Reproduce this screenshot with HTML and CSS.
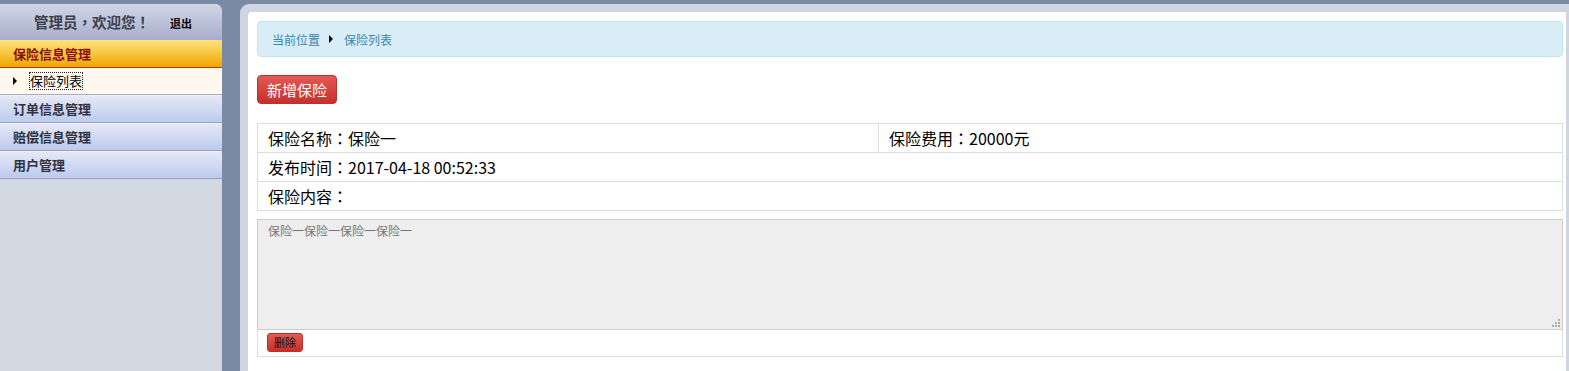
FILE: index.html
```html
<!DOCTYPE html>
<html lang="zh-CN">
<head>
<meta charset="utf-8">
<title>保险列表</title>
<link rel="stylesheet" href="styles.css">
</head>
<body>
<div class="layout">
  <aside class="sidebar">
    <div class="side-head">
      <span class="welcome">管理员<span class="pc">，</span>欢迎您<span class="pc">！</span></span>
      <a class="logout" href="#">退出</a>
    </div>
    <div class="menu-title active">保险信息管理</div>
    <div class="menu-sub"><span class="tri"></span><a class="sub-link" href="#">保险列表</a></div>
    <div class="menu-title">订单信息管理</div>
    <div class="menu-title">赔偿信息管理</div>
    <div class="menu-title">用户管理</div>
  </aside>
  <main class="frame">
    <div class="content">
      <div class="crumb">
        <span class="crumb-link">当前位置</span>
        <span class="crumb-tri"></span>
        <span class="crumb-link">保险列表</span>
      </div>
      <div class="actions"><button class="btn-red">新增保险</button></div>
      <table class="info">
        <tr>
          <td class="col1">保险名称<span class="pc">：</span>保险一</td>
          <td>保险费用<span class="pc">：</span>20000元</td>
        </tr>
        <tr><td colspan="2">发布时间<span class="pc">：</span>2017-04-18 00:52:33</td></tr>
        <tr><td colspan="2">保险内容<span class="pc">：</span></td></tr>
      </table>
      <div class="detail">
        <div class="textbox">保险一保险一保险一保险一<span class="grip"></span></div>
        <div class="ops"><button class="btn-del">删除</button></div>
      </div>
    </div>
  </main>
</div>
</body>
</html>
```
FILE: styles.css
```css
html, body {
  margin: 0;
  padding: 0;
  height: 100%;
}
body {
  background: #7b8aa4;
  font-family: "Noto Sans CJK SC", "Microsoft YaHei", "Liberation Sans", sans-serif;
  overflow: hidden;
  text-spacing-trim: space-all;
  font-feature-settings: "chws" 0, "halt" 0, "palt" 0;
}
.pc {
  display: inline-block;
  width: 1em;
  text-align: center;
  font-family: "Noto Sans CJK TC", "Noto Sans CJK SC", sans-serif;
}
.layout {
  display: flex;
  gap: 18px;
  padding-top: 4px;
  height: 367px;
}
.sidebar {
  width: 222px;
  flex: none;
  background: #d2d8e2;
  border-top-right-radius: 7px;
  overflow: hidden;
}
.side-head {
  height: 36px;
  background: linear-gradient(#d0d5e6, #a9afcb);
  display: flex;
  align-items: center;
  padding-left: 34px;
  box-sizing: border-box;
}
.welcome {
  font-size: 14.5px;
  font-weight: bold;
  color: #3c3f4c;
  line-height: 18px;
  white-space: nowrap;
}
.logout {
  margin-left: 20px;
  font-size: 11px;
  font-weight: bold;
  color: #000;
  text-decoration: none;
  margin-top: 2px;
}
.menu-title {
  height: 26px;
  line-height: 26px;
  padding-left: 13px;
  font-size: 13px;
  font-weight: bold;
  color: #30333f;
  background: linear-gradient(#e5e8f6, #bccaee);
  border-top: 1px solid #eef0f8;
  border-bottom: 1px solid #9da3bc;
}
.menu-title.active {
  height: 27px;
  line-height: 27px;
  color: #8a1010;
  background: linear-gradient(#ffe37e, #f0a600);
  border-top: none;
  border-bottom: 1px solid #b3361a;
}
.menu-sub {
  height: 26px;
  background: #fff8ef;
  display: flex;
  align-items: center;
  padding-left: 13px;
  border-bottom: 1px solid #a6acc4;
}
.tri {
  width: 0;
  height: 0;
  border-top: 4px solid transparent;
  border-bottom: 4px solid transparent;
  border-left: 4px solid #000;
}
.sub-link {
  margin-left: 13px;
  font-size: 13px;
  color: #000;
  text-decoration: none;
  outline: 1px dotted #222;
  line-height: 16px;
}
.frame {
  flex: 1;
  background: #d0d6e1;
  border-top-left-radius: 9px;
  padding: 8px 3px 0 8px;
  min-width: 0;
}
.content {
  background: #fff;
  height: 100%;
  border-top-left-radius: 4px;
  padding: 9px 3px 0 9px;
  box-sizing: border-box;
}
.crumb {
  height: 36px;
  box-sizing: border-box;
  background: #d9edf7;
  border: 1px solid #bce8f1;
  border-radius: 4px;
  display: flex;
  align-items: center;
  padding-left: 14px;
  font-size: 12px;
}
.crumb-link {
  color: #3a87ad;
}
.crumb-tri {
  width: 0;
  height: 0;
  border-top: 4px solid transparent;
  border-bottom: 4px solid transparent;
  border-left: 4px solid #000;
  margin: 0 11px 0 9px;
}
.actions {
  margin-top: 18px;
}
.btn-red {
  width: 80px;
  height: 29px;
  border: 1px solid #b8322e;
  border-radius: 4px;
  background: linear-gradient(#e35955, #c7302b);
  color: #fff;
  font-family: inherit;
  font-size: 15px;
  padding: 0;
  display: block;
}
.info {
  margin-top: 19px;
  width: 100%;
  border-collapse: collapse;
  font-size: 16px;
  color: #000;
}
.info td {
  border: 1px solid #dddddd;
  height: 28px;
  padding: 0 10px;
  line-height: 28px;
}
.info .col1 {
  width: 600px;
}
.detail {
  margin-top: 8px;
  border: 1px solid #dddddd;
  border-top: none;
}
.textbox {
  position: relative;
  height: 111px;
  box-sizing: border-box;
  margin: 0 -1px;
  background: #eeeeee;
  border: 1px solid #cccccc;
  padding: 2px 10px;
  font-size: 12px;
  color: #777;
  line-height: 18px;
}
.grip {
  position: absolute;
  right: 2px;
  bottom: 2px;
  width: 8px;
  height: 8px;
  background:
    linear-gradient(#aaa, #aaa) 6px 0 / 2px 2px no-repeat,
    linear-gradient(#aaa, #aaa) 3px 3px / 2px 2px no-repeat,
    linear-gradient(#aaa, #aaa) 6px 3px / 2px 2px no-repeat,
    linear-gradient(#aaa, #aaa) 0 6px / 2px 2px no-repeat,
    linear-gradient(#aaa, #aaa) 3px 6px / 2px 2px no-repeat,
    linear-gradient(#aaa, #aaa) 6px 6px / 2px 2px no-repeat;
}
.ops {
  height: 26px;
  padding: 3px 0 0 9px;
  box-sizing: border-box;
}
.btn-del {
  width: 36px;
  height: 19px;
  padding: 0;
  border: 1px solid #b8322e;
  border-radius: 3px;
  background: linear-gradient(#e35955, #c7302b);
  color: #111;
  font-family: inherit;
  font-size: 11px;
  line-height: 15px;
  display: block;
}
```
